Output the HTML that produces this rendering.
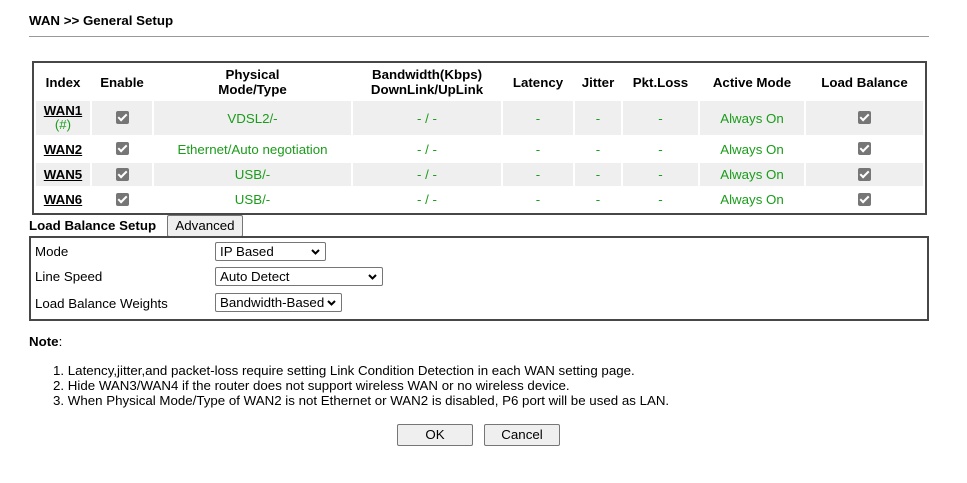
<!DOCTYPE html>
<html><head><style>
body{margin:0;background:#fff;font-family:"Liberation Sans",Arial,sans-serif;font-size:13.3px;color:#000;width:967px;height:483px;overflow:hidden;position:relative}
.a{position:absolute}
.title{left:29px;top:13px;font-weight:bold;font-size:13.3px}
.hr{left:29px;top:36px;width:900px;height:1px;background:#999}
table.m{position:absolute;left:32px;top:61px;width:895px;height:152px;border:2px solid #474747;border-collapse:separate;border-spacing:2px;box-sizing:border-box;table-layout:fixed}
table.m th{font-weight:bold;font-size:13.3px;line-height:15px;height:34px;padding:0}
table.m td{text-align:center;color:#1b9c1b;padding:0;font-size:13.3px}
tr.g td{background:#efefef}
td.i a{color:#000;font-weight:bold;text-decoration:underline}
.cb{display:inline-block;width:13px;height:13px;background:#767676;border-radius:2px;position:relative;vertical-align:middle;top:-1px}
.cb:after{content:"";position:absolute;left:4px;top:1px;width:3px;height:7px;border:solid #fff;border-width:0 2px 2px 0;transform:rotate(45deg)}
.btn{position:absolute;background:#efefef;border:1px solid #767676;border-radius:2px;box-sizing:border-box;text-align:center;font-size:13.3px}
.box{left:29px;top:236px;width:900px;height:85px;border:2px solid #474747;box-sizing:border-box}
.sel{position:absolute;border:1px solid #767676;border-radius:2px;box-sizing:border-box;height:19px;padding-left:4px;line-height:17px;font-size:13.3px}
.sel svg{position:absolute;right:5px;top:6px}
</style></head><body>
<div class="a title">WAN &gt;&gt; General Setup</div>
<div class="a hr"></div>
<table class="m">
<colgroup><col style="width:54px"><col style="width:60px"><col style="width:197px"><col style="width:148px"><col style="width:70px"><col style="width:46px"><col style="width:75px"><col style="width:104px"><col></colgroup>
<tr><th>Index</th><th>Enable</th><th>Physical<br>Mode/Type</th><th>Bandwidth(Kbps)<br>DownLink/UpLink</th><th>Latency</th><th>Jitter</th><th>Pkt.Loss</th><th>Active Mode</th><th>Load Balance</th></tr>
<tr class="g" style="height:34px"><td class="i" style="line-height:14px"><a>WAN1</a><br>(#)</td><td><span class="cb"></span></td><td>VDSL2/-</td><td>- / -</td><td>-</td><td>-</td><td>-</td><td>Always On</td><td><span class="cb"></span></td></tr>
<tr style="height:24px"><td class="i"><a>WAN2</a></td><td><span class="cb"></span></td><td>Ethernet/Auto negotiation</td><td>- / -</td><td>-</td><td>-</td><td>-</td><td>Always On</td><td><span class="cb"></span></td></tr>
<tr class="g" style="height:23px"><td class="i"><a>WAN5</a></td><td><span class="cb"></span></td><td>USB/-</td><td>- / -</td><td>-</td><td>-</td><td>-</td><td>Always On</td><td><span class="cb"></span></td></tr>
<tr style="height:23px"><td class="i"><a>WAN6</a></td><td><span class="cb"></span></td><td>USB/-</td><td>- / -</td><td>-</td><td>-</td><td>-</td><td>Always On</td><td><span class="cb"></span></td></tr>
</table>
<div class="a" style="left:29px;top:218px;font-weight:bold">Load Balance Setup</div>
<div class="btn" style="left:167px;top:215px;width:76px;height:22px;line-height:20px">Advanced</div>
<div class="a box"></div>
<div class="a" style="left:35px;top:244px">Mode</div>
<div class="a" style="left:35px;top:269px">Line Speed</div>
<div class="a" style="left:35px;top:296px">Load Balance Weights</div>
<div class="sel" style="left:215px;top:242px;width:111px">IP Based<svg width="9" height="6"><path d="M1 1l3.5 3.5L8 1" stroke="#000" stroke-width="2" fill="none"/></svg></div>
<div class="sel" style="left:215px;top:267px;width:168px">Auto Detect<svg width="9" height="6"><path d="M1 1l3.5 3.5L8 1" stroke="#000" stroke-width="2" fill="none"/></svg></div>
<div class="sel" style="left:215px;top:293px;width:127px">Bandwidth-Based<svg width="9" height="6"><path d="M1 1l3.5 3.5L8 1" stroke="#000" stroke-width="2" fill="none"/></svg></div>
<div class="a" style="left:29px;top:334px;font-weight:bold">Note<span style="font-weight:normal">:</span></div>
<div class="a" style="left:53px;top:363px;line-height:15px">1. Latency,jitter,and packet-loss require setting Link Condition Detection in each WAN setting page.<br>2. Hide WAN3/WAN4 if the router does not support wireless WAN or no wireless device.<br>3. When Physical Mode/Type of WAN2 is not Ethernet or WAN2 is disabled, P6 port will be used as LAN.</div>
<div class="btn" style="left:397px;top:424px;width:76px;height:22px;line-height:20px">OK</div>
<div class="btn" style="left:484px;top:424px;width:76px;height:22px;line-height:20px">Cancel</div>
</body></html>
